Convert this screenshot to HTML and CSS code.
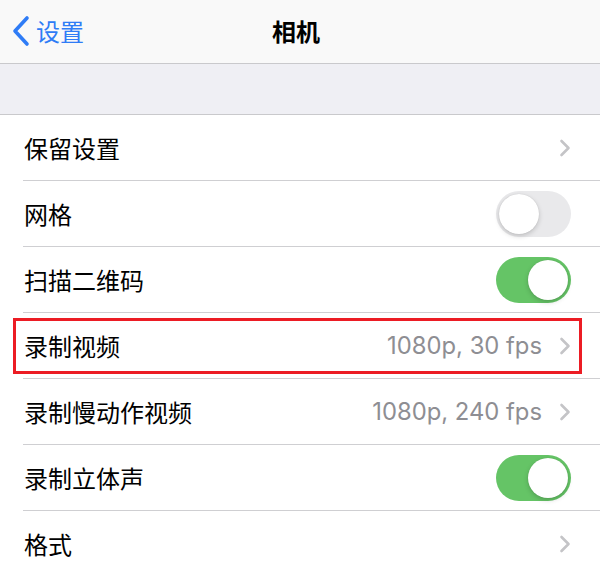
FILE: index.html
```html
<!DOCTYPE html>
<html lang="zh-CN">
<head>
    <meta charset="UTF-8">
    <meta name="viewport" content="width=device-width, initial-scale=1.0">
    <title>相机</title>
    <link rel="stylesheet" href="styles.css">
</head>
<body>
    <div class="nav-bar">
        <div class="nav-back">
            <svg class="back-icon" width="20" height="32" viewBox="0 0 20 32">
                <path d="M16 3 L4 16 L16 29" fill="none" stroke="#2f7cf6" stroke-width="3.6" stroke-linecap="round" stroke-linejoin="round"/>
            </svg>
            <span class="back-text">设置</span>
        </div>
        <div class="nav-title">相机</div>
    </div>
    <div class="spacer"></div>
    <div class="settings-list">
        <div class="row">
            <div class="row-label">保留设置</div>
            <div class="row-right">
                <svg class="chevron" width="12" height="18" viewBox="0 0 12 18"><path d="M2.5 2 L9.5 9 L2.5 16" fill="none" stroke="#c4c4c7" stroke-width="2.6" stroke-linecap="round" stroke-linejoin="round"/></svg>
            </div>
        </div>
        <div class="row">
            <div class="row-label">网格</div>
            <div class="row-right">
                <div class="switch"><div class="knob"></div></div>
            </div>
        </div>
        <div class="row">
            <div class="row-label">扫描二维码</div>
            <div class="row-right">
                <div class="switch on"><div class="knob"></div></div>
            </div>
        </div>
        <div class="row row-marked">
            <div class="row-label">录制视频</div>
            <div class="row-right">
                <span class="row-value">1080p, 30 fps</span>
                <svg class="chevron" width="12" height="18" viewBox="0 0 12 18"><path d="M2.5 2 L9.5 9 L2.5 16" fill="none" stroke="#c4c4c7" stroke-width="2.6" stroke-linecap="round" stroke-linejoin="round"/></svg>
            </div>
        </div>
        <div class="row">
            <div class="row-label">录制慢动作视频</div>
            <div class="row-right">
                <span class="row-value">1080p, 240 fps</span>
                <svg class="chevron" width="12" height="18" viewBox="0 0 12 18"><path d="M2.5 2 L9.5 9 L2.5 16" fill="none" stroke="#c4c4c7" stroke-width="2.6" stroke-linecap="round" stroke-linejoin="round"/></svg>
            </div>
        </div>
        <div class="row">
            <div class="row-label">录制立体声</div>
            <div class="row-right">
                <div class="switch on"><div class="knob"></div></div>
            </div>
        </div>
        <div class="row">
            <div class="row-label">格式</div>
            <div class="row-right">
                <svg class="chevron" width="12" height="18" viewBox="0 0 12 18"><path d="M2.5 2 L9.5 9 L2.5 16" fill="none" stroke="#c4c4c7" stroke-width="2.6" stroke-linecap="round" stroke-linejoin="round"/></svg>
            </div>
        </div>
    </div>
</body>
</html>
```

FILE: styles.css
```css
body{
    margin: 0;
    background-color: #efeff4;
    font-family: "Noto Sans CJK SC", "Noto Sans", sans-serif;
    color: #000;
    overflow: hidden;
}
.nav-bar{
    position: relative;
    display: flex;
    align-items: center;
    justify-content: center;
    height: 63px;
    background-color: #f9f9f9;
    border-bottom: 1px solid #c9c9cc;
}
.nav-back{
    position: absolute;
    left: 11px;
    top: 0;
    height: 63px;
    display: flex;
    align-items: center;
    color: #2f7cf6;
}
.back-icon{
    margin-top: -1px;
}
.back-text{
    font-size: 24px;
    margin-left: 5px;
    line-height: 1;
    margin-top: -1px;
}
.nav-title{
    font-size: 24px;
    font-weight: bold;
    line-height: 1;
    margin-top: -1px;
    margin-right: 8px;
}
.spacer{
    height: 50px;
}
.settings-list{
    background-color: #fff;
    border-top: 1px solid #c9c9cc;
}
.row{
    position: relative;
    display: flex;
    align-items: center;
    justify-content: space-between;
    height: 65px;
    margin-left: 23px;
    padding-right: 29px;
    border-bottom: 1px solid #cfcfd2;
}
.row:last-child{
    border-bottom: none;
}
.row-label{
    font-size: 24px;
    line-height: 1;
    margin-left: 1px;
}
.row-right{
    display: flex;
    align-items: center;
}
.row-value{
    font-family: Inter, "Liberation Sans", sans-serif;
    font-size: 23.8px;
    color: #8e8e93;
    margin-right: 17px;
}
.chevron{
    display: block;
}
.switch{
    position: relative;
    width: 75px;
    height: 46px;
    border-radius: 23px;
    background-color: #e9e9eb;
}
.switch .knob{
    position: absolute;
    top: 3px;
    left: 3px;
    width: 40px;
    height: 40px;
    border-radius: 50%;
    background-color: #fff;
    box-shadow: 0 2px 5px rgba(0, 0, 0, 0.18), 0 0 1px rgba(0, 0, 0, 0.15);
}
.switch.on{
    background-color: #65c466;
}
.switch.on .knob{
    left: 32px;
}
.row-marked::after{
    content: "";
    position: absolute;
    left: -10px;
    right: 18px;
    top: 5px;
    bottom: 4px;
    border: 3px solid #ec1c24;
    pointer-events: none;
}
```
